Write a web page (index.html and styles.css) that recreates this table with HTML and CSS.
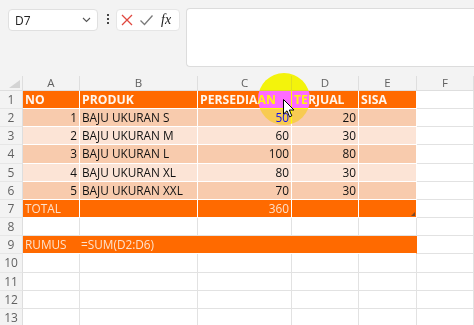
FILE: index.html
```html
<!DOCTYPE html>
<html>
<head>
<meta charset="utf-8">
<link rel="stylesheet" href="styles.css">
</head>
<body>
<div class="app">
  <div class="toolbar">
    <div class="namebox"><span>D7</span>
      <svg class="chev" width="9" height="6" viewBox="0 0 9 6"><path d="M1 1 L4.5 4.5 L8 1" fill="none" stroke="#555" stroke-width="1.1"/></svg>
    </div>
    <div class="dots"><i></i><i></i><i></i></div>
    <div class="fxbox">
      <svg width="14" height="14" viewBox="0 0 14 14"><path d="M2 2 L12 12 M12 2 L2 12" stroke="#e0473f" stroke-width="1.3" fill="none"/></svg>
      <svg width="15" height="14" viewBox="0 0 15 14"><path d="M1.5 7.5 L5.5 11.5 L13.5 2.5" stroke="#7a7a7a" stroke-width="1.3" fill="none"/></svg>
      <span class="fx">fx</span>
    </div>
    <div class="formula"></div>
  </div>
  <div class="sheet">
    <div class="corner"><svg width="14" height="10" viewBox="0 0 14 10"><path d="M13 1 L13 9 L2 9 Z" fill="#d4d4d4"/></svg></div>
    <div class="ch">A</div><div class="ch">B</div><div class="ch">C</div><div class="ch">D</div><div class="ch">E</div><div class="ch">F</div>

    <div class="rh">1</div><div class="c hd">NO</div><div class="c hd">PRODUK</div><div class="c hd">PERSEDIAAN</div><div class="c hd">TERJUAL</div><div class="c hd">SISA</div><div class="c"></div>
    <div class="rh">2</div><div class="c d1 r">1</div><div class="c d1">BAJU UKURAN S</div><div class="c d1 r">50</div><div class="c d1 r">20</div><div class="c d1"></div><div class="c"></div>
    <div class="rh">3</div><div class="c d2 r">2</div><div class="c d2">BAJU UKURAN M</div><div class="c d2 r">60</div><div class="c d2 r">30</div><div class="c d2"></div><div class="c"></div>
    <div class="rh">4</div><div class="c d1 r">3</div><div class="c d1">BAJU UKURAN L</div><div class="c d1 r">100</div><div class="c d1 r">80</div><div class="c d1"></div><div class="c"></div>
    <div class="rh">5</div><div class="c d2 r">4</div><div class="c d2">BAJU UKURAN XL</div><div class="c d2 r">80</div><div class="c d2 r">30</div><div class="c d2"></div><div class="c"></div>
    <div class="rh">6</div><div class="c d1 r">5</div><div class="c d1">BAJU UKURAN XXL</div><div class="c d1 r">70</div><div class="c d1 r">30</div><div class="c d1"></div><div class="c"></div>
    <div class="rh">7</div><div class="c tot">TOTAL</div><div class="c tot"></div><div class="c tot r">360</div><div class="c tot"></div><div class="c tot sel"><span class="handle"></span></div><div class="c"></div>
    <div class="rh">8</div><div class="c"></div><div class="c"></div><div class="c"></div><div class="c"></div><div class="c"></div><div class="c"></div>
    <div class="rh">9</div><div class="c rumus"><span class="rl">RUMUS</span><span>=SUM(D2:D6)</span></div><div class="c"></div>
    <div class="rh">10</div><div class="c"></div><div class="c"></div><div class="c"></div><div class="c"></div><div class="c"></div><div class="c"></div>
    <div class="rh">11</div><div class="c"></div><div class="c"></div><div class="c"></div><div class="c"></div><div class="c"></div><div class="c"></div>
    <div class="rh">12</div><div class="c"></div><div class="c"></div><div class="c"></div><div class="c"></div><div class="c"></div><div class="c"></div>
    <div class="rh">13</div><div class="c"></div><div class="c"></div><div class="c"></div><div class="c"></div><div class="c"></div><div class="c"></div>
  </div>
  <div class="spot"></div>
  <svg class="cursor" width="12" height="19" viewBox="0 0 12 19"><path d="M0.5 0.5 L0.5 15 L4 11.8 L6.6 17.8 L8.8 16.8 L6.3 11 L11 11 Z" fill="#fff" stroke="#000" stroke-width="1"/></svg>
</div>
</body>
</html>
```
FILE: styles.css
```css
html, body { margin: 0; padding: 0; }
body {
  background: #f3f3f3;
  font-family: "Open Sans", "Liberation Sans", sans-serif;
  width: 474px;
  height: 325px;
  overflow: hidden;
}
.app { position: relative; width: 474px; height: 325px; overflow: hidden; }
.toolbar {
  height: 76px;
  display: flex;
  align-items: flex-start;
  padding: 0 0 0 8px;
  box-sizing: border-box;
}
.namebox {
  margin-top: 9px;
  width: 90px;
  height: 22px;
  box-sizing: border-box;
  background: #fff;
  border: 1px solid #e0e0e0;
  border-radius: 4px;
  display: flex;
  align-items: center;
  justify-content: space-between;
  padding: 0 6px 0 6px;
  font-size: 12px;
  color: #222;
}
.dots {
  margin: 14px 0 0 7px;
  width: 5px;
  display: flex;
  flex-direction: column;
  gap: 2px;
  align-items: center;
}
.dots i { display: block; width: 2px; height: 2px; background: #444; }
.fxbox {
  margin: 9px 0 0 6px;
  width: 64px;
  height: 22px;
  box-sizing: border-box;
  background: #fff;
  border: 1px solid #e6e6e6;
  border-radius: 4px;
  display: flex;
  align-items: center;
  gap: 5px;
  padding-left: 3px;
}
.fx {
  font-family: "Liberation Serif", serif;
  font-style: italic;
  font-size: 14px;
  color: #222;
  margin-left: 2px;
}
.formula {
  margin: 8px 0 0 6px;
  flex: 1;
  height: 59px;
  background: #fff;
  border: 1px solid #dcdcdc;
  border-right: none;
  border-radius: 4px 0 0 4px;
  box-sizing: border-box;
}
.sheet {
  display: grid;
  grid-template-columns: 23px 57px 118px 94px 67px 58px 57px;
  grid-template-rows: 15px repeat(13, 18.17px);
  background: #fff;
}
.corner {
  background: #f3f3f3;
  border-right: 1px solid #dedede;
  border-bottom: 1px solid #dedede;
  box-sizing: border-box;
  display: flex;
  align-items: flex-end;
  justify-content: flex-end;
  padding: 0 1px 1px 0;
}
.ch {
  background: #f3f3f3;
  border-right: 1px solid #dedede;
  border-bottom: 1px solid #dedede;
  box-sizing: border-box;
  font-size: 11.5px;
  color: #616161;
  text-align: center;
  line-height: 14px;
}
.rh {
  background: #f3f3f3;
  border-right: 1px solid #dedede;
  border-bottom: 1px solid #e6e6e6;
  box-sizing: border-box;
  font-size: 12px;
  color: #616161;
  text-align: center;
  line-height: 18px;
}
.c {
  border-right: 1px solid #e2e2e2;
  border-bottom: 1px solid #e2e2e2;
  box-sizing: border-box;
  font-size: 11.8px;
  line-height: 17px;
  padding: 0 2px;
  white-space: nowrap;
  overflow: visible;
  color: #111;
  position: relative;
}
.r { text-align: right; }
.hd { background: #ff6a00; color: #fff6ee; font-weight: 700; font-size: 12.2px; border-color: #fff; }
.d1 { background: #f8cbad; border-color: #fff; }
.d2 { background: #fce4d6; border-color: #fff; }
.tot { background: #ff6a00; color: #fde2cc; border-color: #fff; }
.handle {
  position: absolute;
  right: 1px;
  bottom: 1px;
  width: 0; height: 0;
  border-left: 4px solid transparent;
  border-bottom: 4px solid #7a4a2a;
}
.rumus {
  grid-column: span 5;
  background: #ff6a00;
  color: #fde2cc;
  border-color: #ff6a00;
  border-bottom-color: #fff;
  display: flex;
}
.rl { width: 56px; }
.spot {
  position: absolute;
  left: 258px;
  top: 73px;
  width: 52px;
  height: 52px;
  border-radius: 50%;
  background: #0000ff;
  mix-blend-mode: difference;
}
.cursor { position: absolute; left: 283px; top: 99px; }
```
